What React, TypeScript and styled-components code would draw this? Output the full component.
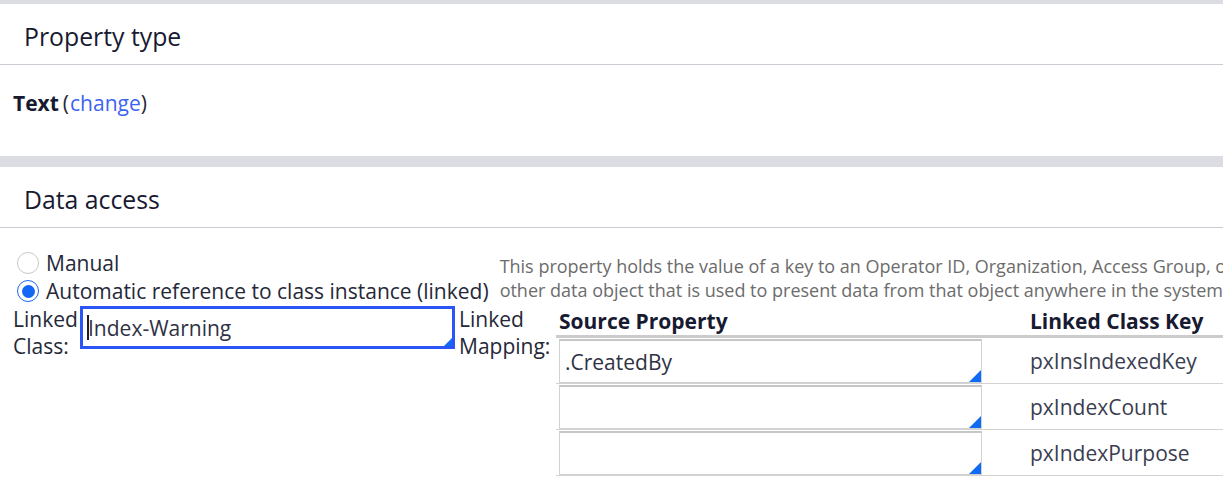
import React from "react";
import styled, { createGlobalStyle } from "styled-components";

const GlobalStyle = createGlobalStyle`
  html, body {
    margin: 0;
    padding: 0;
    background: #ffffff;
    overflow: hidden;
  }
  body {
    font-family: "Open Sans", "Noto Sans", sans-serif;
    color: #252838;
  }
  * { box-sizing: border-box; }
`;

const rows = [
  { source: ".CreatedBy", key: "pxInsIndexedKey" },
  { source: "", key: "pxIndexCount" },
  { source: "", key: "pxIndexPurpose" },
];

const App = () => {
  return (
    <Page>
      <GlobalStyle />
      <GrayBand height={4} />

      <Section>
        <SectionHeader>
          <HeaderTitle>Property type</HeaderTitle>
        </SectionHeader>
        <TypeBody>
          <TypeLine>
            <Strong>Text</Strong>
            <Paren>(</Paren>
            <ChangeLink href="#">change</ChangeLink>
            <Paren>)</Paren>
          </TypeLine>
        </TypeBody>
      </Section>

      <GrayBand height={11} />

      <Section>
        <SectionHeader>
          <HeaderTitle>Data access</HeaderTitle>
        </SectionHeader>

        <DataBody>
          <TopRow>
            <RadioGroup>
              <RadioRow>
                <Radio checked={false} />
                <RadioLabel>Manual</RadioLabel>
              </RadioRow>
              <RadioRow>
                <Radio checked />
                <RadioLabel>Automatic reference to class instance (linked)</RadioLabel>
              </RadioRow>
            </RadioGroup>
            <Description>
              <DescLine>This property holds the value of a key to an Operator ID, Organization, Access Group, or</DescLine>
              <DescLine>other data object that is used to present data from that object anywhere in the system.</DescLine>
            </Description>
          </TopRow>

          <LinkRow>
            <FieldLabel width={67}>
              Linked
              <br />
              Class:
            </FieldLabel>
            <ClassInput>
              <Caret />
              <InputText>Index-Warning</InputText>
              <Corner size={8} inset={0} />
            </ClassInput>
            <FieldLabel width={101} pad={4}>
              Linked
              <br />
              Mapping:
            </FieldLabel>

            <MappingTable>
              <HeadRow>
                <HeadCell>Source Property</HeadCell>
                <HeadKeyCell>Linked Class Key</HeadKeyCell>
              </HeadRow>
              {rows.map((row) => (
                <BodyRow key={row.key}>
                  <SourceCell>
                    <SourceInput>
                      <SourceText>{row.source}</SourceText>
                      <Corner size={12} inset={0} />
                    </SourceInput>
                  </SourceCell>
                  <KeyCell>{row.key}</KeyCell>
                </BodyRow>
              ))}
            </MappingTable>
          </LinkRow>
        </DataBody>
      </Section>
    </Page>
  );
};
export default App;

const Page = styled.div`
  width: 1223px;
  height: 482px;
  overflow: hidden;
  background: #ffffff;
`;

const GrayBand = styled.div<{ height: number }>`
  height: ${({ height }) => height}px;
  background: #dcdde2;
`;

const Section = styled.section`
  display: flex;
  flex-direction: column;
`;

const SectionHeader = styled.div`
  display: flex;
  align-items: center;
  height: 61px;
  padding: 4px 24px 0;
  border-bottom: 1px solid #cbccd3;
`;

const HeaderTitle = styled.h2`
  margin: 0;
  font-size: 24.8px;
  font-weight: 400;
  color: #171a31;
  line-height: 30px;
`;

const TypeBody = styled.div`
  height: 91px;
  padding: 26px 13px 0;
`;

const TypeLine = styled.div`
  display: flex;
  align-items: baseline;
  font-size: 21px;
  line-height: 24px;
`;

const Strong = styled.span`
  font-weight: 700;
  color: #171a31;
  margin-right: 4px;
`;

const Paren = styled.span`
  color: #252838;
`;

const ChangeLink = styled.a`
  color: #3b63f2;
  text-decoration: none;
  margin-left: 1px;
`;

const DataBody = styled.div`
  display: flex;
  flex-direction: column;
  padding: 21px 0 0 13px;
`;

const TopRow = styled.div`
  display: flex;
  align-items: flex-start;
`;

const RadioGroup = styled.div`
  display: flex;
  flex-direction: column;
`;

const RadioRow = styled.label`
  display: flex;
  align-items: center;
  height: 28px;
  gap: 7px;
  padding-left: 4px;
`;

const Radio = styled.span<{ checked?: boolean }>`
  position: relative;
  width: 22px;
  height: 22px;
  border-radius: 50%;
  border: ${({ checked }) => (checked ? "1.5px solid #1f66f0" : "1px solid #c9c9c9")};
  background: #ffffff;
  flex-shrink: 0;

  &::after {
    content: "";
    display: ${({ checked }) => (checked ? "block" : "none")};
    position: absolute;
    inset: 3.5px;
    border-radius: 50%;
    background: #1466f5;
  }
`;

const RadioLabel = styled.span`
  font-size: 21px;
  line-height: 28px;
  color: #252838;
  white-space: nowrap;
`;

const Description = styled.div`
  margin: 5px 0 0 11px;
  display: flex;
  flex-direction: column;
  color: #6c6c6c;
  font-size: 18px;
  line-height: 24px;
`;

const DescLine = styled.span`
  white-space: nowrap;
`;

const LinkRow = styled.div`
  display: flex;
  align-items: flex-start;
  margin-top: 1px;
`;

const FieldLabel = styled.div<{ width: number; pad?: number }>`
  width: ${({ width }) => width}px;
  padding-left: ${({ pad }) => pad || 0}px;
  flex-shrink: 0;
  font-size: 21px;
  line-height: 27px;
  color: #252838;
  padding-top: 0;
`;

const ClassInput = styled.div`
  position: relative;
  display: flex;
  align-items: center;
  width: 375px;
  height: 43px;
  border: 3px solid #2b55f6;
  padding-left: 4px;
  flex-shrink: 0;
`;

const Caret = styled.span`
  width: 2px;
  height: 25px;
  background: #1c1c2e;
`;

const InputText = styled.span`
  font-size: 21px;
  color: #2f3244;
  margin-left: -1px;
`;

const Corner = styled.span<{ size: number; inset: number }>`
  position: absolute;
  right: ${({ inset }) => inset}px;
  bottom: ${({ inset }) => inset}px;
  width: 0;
  height: 0;
  border-style: solid;
  border-width: 0 0 ${({ size }) => size}px ${({ size }) => size}px;
  border-color: transparent transparent #0f6af6 transparent;
`;

const MappingTable = styled.div`
  display: flex;
  flex-direction: column;
  flex-shrink: 0;
`;

const HeadRow = styled.div`
  display: flex;
  align-items: center;
  height: 32px;
  border-bottom: 3px solid #cccccc;
`;

const HeadCell = styled.div`
  width: 427px;
  padding-left: 3px;
  font-size: 21px;
  font-weight: 700;
  color: #171a31;
`;

const HeadKeyCell = styled(HeadCell)`
  width: 300px;
  padding-left: 47px;
`;

const BodyRow = styled.div`
  display: flex;
  align-items: center;
  height: 46px;
  border-bottom: 1px solid #d3d3d3;
`;

const SourceCell = styled.div`
  width: 427px;
  height: 100%;
  padding: 1px 0 0 3px;
`;

const SourceInput = styled.div`
  position: relative;
  display: flex;
  align-items: center;
  width: 423px;
  height: 44px;
  border: 1px solid #d2d2d2;
  border-top: 2px solid #c6c6c6;
  padding-left: 5px;
`;

const SourceText = styled.span`
  font-size: 21px;
  color: #2f3244;
`;

const KeyCell = styled.div`
  width: 300px;
  padding-left: 47px;
  font-size: 21px;
  color: #3a3d50;
`;
